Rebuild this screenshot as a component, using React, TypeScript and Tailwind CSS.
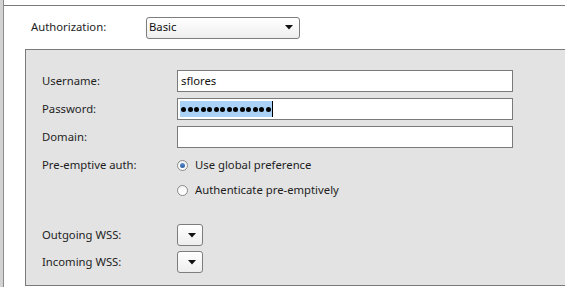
import React from "react";

const font = { fontFamily: '"Noto Sans", "Open Sans", "Liberation Sans", sans-serif' };

const Arrow = () => (
  <svg width="8" height="5" viewBox="0 0 8 5" className="block">
    <path d="M0 0 H8 L4 4.5 Z" fill="#111" />
  </svg>
);

const Combo = ({ value, className }: { value?: string; className: string }) => (
  <div
    className={`flex items-center justify-between rounded-[3px] border border-[#7d7d7d] bg-gradient-to-b from-white to-[#eeeeee] ${className}`}
  >
    <span className="pl-[2px] text-[11.3px] text-[#111]">{value}</span>
    <span className="pr-[6px]">
      <Arrow />
    </span>
  </div>
);

const Label = ({ children }: { children: React.ReactNode }) => (
  <div className="w-[135px] shrink-0 text-[11.3px] text-[#1e1e1e]">{children}</div>
);

const Radio = ({ checked, label }: { checked?: boolean; label: string }) => (
  <div className="flex items-center gap-[7px]">
    <span className="flex h-[11px] w-[11px] items-center justify-center rounded-full border border-[#8a8a8a] bg-gradient-to-b from-[#f4f4f4] to-white">
      {checked && <span className="h-[5px] w-[5px] rounded-full bg-gradient-to-b from-[#5d8fd0] to-[#2d5e9e]" />}
    </span>
    <span className="text-[11.3px] text-[#1e1e1e]">{label}</span>
  </div>
);

const dots = Array.from({ length: 14 });

export default function App() {
  return (
    <div className="h-[287px] w-[565px] overflow-hidden bg-white" style={font}>
      <div className="flex h-full">
        <div className="w-[3px] shrink-0 bg-[#d2d2d2]" />
        <div className="w-[1px] shrink-0 bg-[#8c8c8c]" />
        <div className="flex-1 pt-[5px]">
          <div className="border-t border-[#7a7a7a]">
            {/* Authorization row */}
            <div className="flex h-[43px] items-center pl-[27px]">
              <div className="w-[115px] text-[11.3px] text-[#1e1e1e]">Authorization:</div>
              <Combo value="Basic" className="h-[22px] w-[154px]" />
            </div>

            {/* Credentials panel */}
            <div className="ml-[21px] h-[237px] border-y border-l border-[#7a7a7a] bg-[#e3e3e3] pl-[16px] pt-[20px]">
              <div className="flex flex-col gap-[6px]">
                <div className="flex h-[22px] items-center">
                  <Label>Username:</Label>
                  <div className="flex h-[22px] w-[336px] items-center border border-[#7a7a7a] bg-white pl-[3px] text-[11.3px] text-[#111]">
                    sflores
                  </div>
                </div>
                <div className="flex h-[22px] items-center">
                  <Label>Password:</Label>
                  <div className="flex h-[22px] w-[336px] items-center border border-[#7a7a7a] bg-white pl-[2px]">
                    <span className="flex h-[16px] items-center gap-[1.5px] bg-[#aad1f6] px-[1px]">
                      {dots.map((_, i) => (
                        <span key={i} className="h-[5px] w-[5px] rounded-full bg-black" />
                      ))}
                    </span>
                    <span className="h-[16px] w-[1px] bg-black" />
                  </div>
                </div>
                <div className="flex h-[22px] items-center">
                  <Label>Domain:</Label>
                  <div className="h-[22px] w-[336px] border border-[#7a7a7a] bg-white" />
                </div>
              </div>

              <div className="mt-[5px] flex">
                <div className="flex h-[24px] items-center">
                  <Label>Pre-emptive auth:</Label>
                </div>
                <div className="flex flex-col gap-[1px]">
                  <div className="flex h-[24px] items-center">
                    <Radio checked label="Use global preference" />
                  </div>
                  <div className="flex h-[24px] items-center">
                    <Radio label="Authenticate pre-emptively" />
                  </div>
                </div>
              </div>

              <div className="mt-[22px] flex flex-col gap-[5px]">
                <div className="flex h-[22px] items-center">
                  <Label>Outgoing WSS:</Label>
                  <Combo className="h-[22px] w-[26px]" />
                </div>
                <div className="flex h-[22px] items-center">
                  <Label>Incoming WSS:</Label>
                  <Combo className="h-[22px] w-[26px]" />
                </div>
              </div>
            </div>
          </div>
        </div>
      </div>
    </div>
  );
}
